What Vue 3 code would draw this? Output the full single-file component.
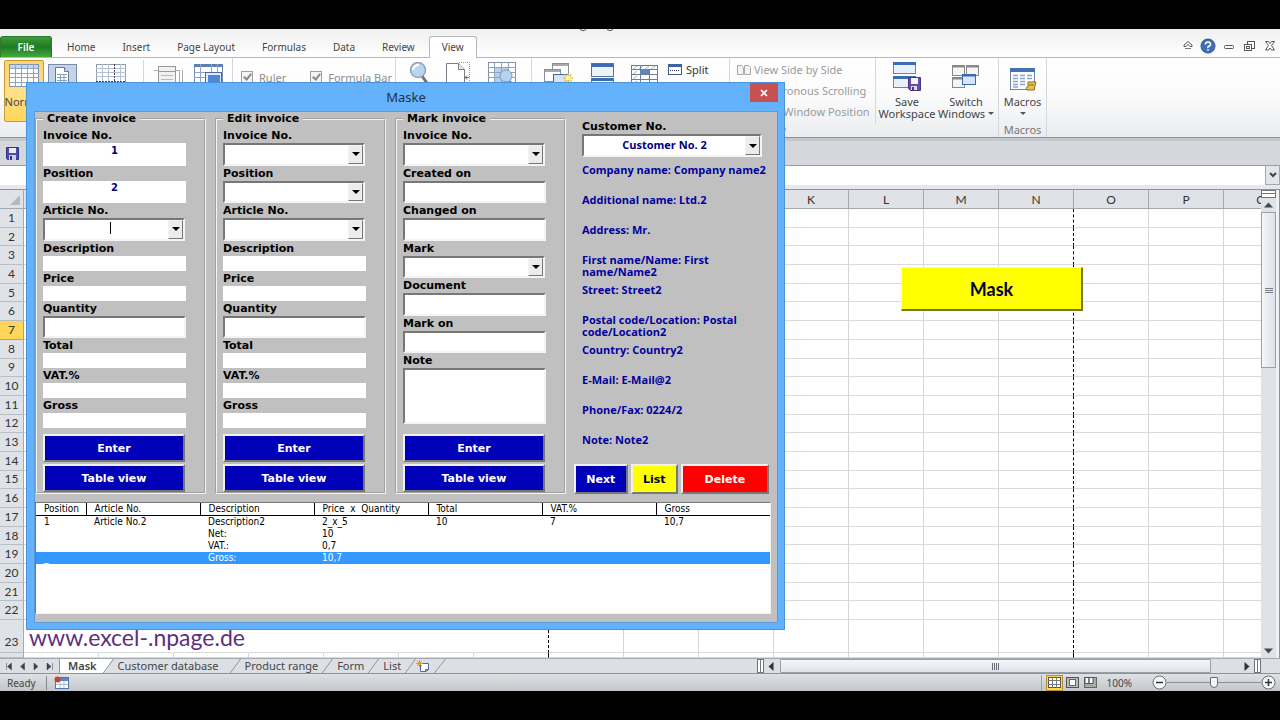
<template>
  <div class="screen">
    <div class="excel">
      <nav class="tabs-bar">
        <svg class="title-rest" width="40" height="3" viewBox="0 0 40 3">
          <path d="M2 0.500q3 2.500 6 0M29 0.500q3 2.500 6 0" fill="none" stroke="#555" />
        </svg>
        <button class="file-btn">File</button>
        <button
          v-for="tab in ribbonTabs"
          :key="tab"
          class="ribbon-tab"
          :class="{ active: tab === 'View' }"
        >
          {{ tab }}
        </button>
        <svg class="window-icons" width="100" height="20" viewBox="0 0 100 20">
          <path d="M8 9l4-3.500 4 3.500v1.500l-2 0-2-2-2 2-2 0z" fill="#fff" stroke="#555" />
          <path d="M9 12.500h6" stroke="#777" />
          <circle cx="32" cy="10" r="7" fill="#3f6fb5" stroke="#2c5590" />
          <path d="M29.500 8.500q0-2.500 2.500-2.500t2.500 2.300q0 1.200-1.500 2t-1 1.700M32 13.200v1.500" fill="none" stroke="#fff" stroke-width="1.600" />
          <rect x="48.500" y="9.500" width="9" height="3" rx="1" fill="#fff" stroke="#555" />
          <rect x="71.500" y="5.500" width="7" height="7" fill="#fff" stroke="#555" />
          <rect x="68.500" y="8.500" width="7" height="6" fill="#fff" stroke="#555" />
          <rect x="70.500" y="10.500" width="3" height="2" fill="#fff" stroke="#555" />
          <path d="M89.500 5.500h3l1.500 2 1.500-2h3l-3 4 3 4.500h-3l-1.500-2-1.500 2h-3l3-4.500z" fill="#fff" stroke="#555" />
        </svg>
      </nav>

      <div class="ribbon">
        <div class="group views">
          <button class="big normal">
            <svg width="30" height="26" viewBox="0 0 30 26">
              <rect x="0.500" y="0.500" width="29" height="22" fill="#fff" stroke="#7d93b4" />
              <rect x="1" y="1" width="28" height="3" fill="#c9d6e8" />
              <path d="M0 4.500h30M0 9.500h30M0 13.500h30M0 18.500h30M6.500 0v23M12.500 0v23M18.500 0v23M24.500 0v23" stroke="#8ea6c6" />
            </svg>
            <span>Normal</span>
          </button>
          <button class="icon-btn" aria-label="Page layout view">
            <svg width="30" height="26" viewBox="0 0 30 26">
              <rect x="0.500" y="0.500" width="28" height="25" fill="#c3d3ea" stroke="#7b8ba8" />
              <path d="M7.500 3.500h9l4 4v18h-13z" fill="#fff" stroke="#6c7788" />
              <path d="M16.500 3.500v4h4" fill="#dde" stroke="#6c7788" />
              <path d="M9 10.500h10M9 13.500h10M9 16.500h10M9 19.500h10M12.500 10v12M16 10v12" stroke="#8aa0c0" />
            </svg>
          </button>
          <button class="icon-btn" aria-label="Page break preview">
            <svg width="30" height="26" viewBox="0 0 30 26">
              <rect x="0.500" y="0.500" width="29" height="24" fill="#fff" stroke="#8c9bb0" />
              <path d="M0 4.500h30M0 8.500h30M0 12.500h30M0 20.500h30M6.500 0v25M12.500 0v25M24.500 0v25" stroke="#b3c0d2" />
              <path d="M0 17.500h30M18.500 0v25" stroke="#445" stroke-dasharray="2 1" />
            </svg>
          </button>
          <div class="divider"></div>
          <button class="icon-btn low" aria-label="Custom views">
            <svg width="30" height="26" viewBox="0 0 30 26">
              <path d="M4.500 2v24M25.500 6v20M0 6.500h26M28.500 6v20" stroke="#aaa" />
              <rect x="4.500" y="2.500" width="17" height="23" fill="#f3f0f4" stroke="#999" />
              <path d="M5 7.500h16" stroke="#c48a8a" />
              <path d="M7 11.500h12M7 15.500h12" stroke="#b9b9c4" />
            </svg>
          </button>
          <button class="icon-btn" aria-label="Full screen">
            <svg width="30" height="26" viewBox="0 0 30 26">
              <rect x="0.500" y="0.500" width="28" height="25" fill="#fff" stroke="#7288ac" />
              <rect x="0" y="0" width="29" height="3" fill="#5d7fb4" />
              <path d="M0 8.500h29M0 13.500h29M0 18.500h29M6.500 0v26M17.500 0v26M23.500 0v26" stroke="#8ea4c4" />
              <rect x="11.500" y="8.500" width="16" height="14" fill="#dfeafa" stroke="#47689c" />
              <rect x="14" y="11" width="12" height="10" fill="#5087d6" />
            </svg>
          </button>
        </div>

        <div class="group show">
          <label class="check"><input v-model="showRuler" type="checkbox" />Ruler</label>
          <label class="check"><input v-model="showFormula" type="checkbox" />Formula Bar</label>
        </div>

        <div class="group zoom">
          <button class="icon-btn" aria-label="Zoom">
            <svg width="20" height="24" viewBox="0 0 20 24">
              <path d="M13 14l5 7" stroke="#77706a" stroke-width="3" />
              <circle cx="9" cy="8" r="7.500" fill="#b9d4ee" stroke="#8fa4bb" stroke-width="1.500" />
              <path d="M4 8q1-5 6-5" fill="none" stroke="#fff" stroke-width="2" />
            </svg>
          </button>
          <button class="icon-btn" aria-label="100%">
            <svg width="25" height="24" viewBox="0 0 25 24">
              <path d="M0.500 1.500h12l6 6v17h-18z" fill="#fff" stroke="#777e88" />
              <path d="M12.500 1.500v6h6" fill="#e6e9ee" stroke="#777e88" />
              <path d="M13 0.500h10.500v23" fill="none" stroke="#99a" stroke-dasharray="1 1" />
              <path d="M19 15.500h4M21 13.500l-2 2 2 2" stroke="#667" fill="none" />
            </svg>
          </button>
          <button class="icon-btn" aria-label="Zoom to selection">
            <svg width="28" height="24" viewBox="0 0 28 24">
              <rect x="0.500" y="0.500" width="27" height="23" fill="#fff" stroke="#8592a6" />
              <rect x="7" y="5" width="14" height="15" fill="#b9cdee" />
              <path d="M0 5.500h28M0 10.500h28M0 15.500h28M0 20.500h28M6.500 0v24M13.500 0v24M20.500 0v24" stroke="#8ea2c2" />
              <circle cx="18" cy="14" r="6" fill="#b5d2ef" stroke="#7f9bbd" />
              <path d="M22 19l4 5" stroke="#77706a" stroke-width="2" />
            </svg>
          </button>
        </div>

        <div class="group window">
          <div class="window-icons-row">
            <button class="icon-btn" aria-label="New window">
              <svg width="30" height="24" viewBox="0 0 30 24">
                <rect x="8.500" y="1.500" width="16" height="11" fill="#fff" stroke="#8a8f98" />
                <rect x="9" y="2" width="15" height="2" fill="#aaa" />
                <rect x="0.500" y="7.500" width="16" height="12" fill="#fff" stroke="#8a8f98" />
                <rect x="1" y="8" width="15" height="2" fill="#aaa" />
                <rect x="9.500" y="12.500" width="15" height="11" fill="#d6e4fa" stroke="#3c63a5" />
                <path d="M24 11v10M19 16h10M20.500 12.500l7 7M27.500 12.500l-7 7" stroke="#edc52e" stroke-width="1.600" />
                <circle cx="24" cy="16" r="2.500" fill="#fff3a0" />
              </svg>
            </button>
            <button class="icon-btn" aria-label="Arrange all">
              <svg width="23" height="24" viewBox="0 0 23 24">
                <rect x="0.500" y="1.500" width="22" height="13" fill="#eef4fc" stroke="#5c7199" />
                <rect x="1" y="2" width="21" height="3" fill="#3e6cb2" />
                <rect x="0.500" y="16.500" width="22" height="8" fill="#eef4fc" stroke="#5c7199" />
                <rect x="1" y="16" width="21" height="3" fill="#3e6cb2" />
              </svg>
            </button>
            <button class="icon-btn" aria-label="Freeze panes">
              <svg width="27" height="24" viewBox="0 0 27 24">
                <rect x="0.500" y="3.500" width="26" height="21" fill="#fff" stroke="#6b7a8f" />
                <path d="M1 8l5-4M1 13l5-4M7 8l5-4M13 8l5-4M19 8l5-4M1 18l5-4M1 23l5-4" stroke="#9fb0c6" />
                <rect x="10" y="7" width="8" height="5" fill="#5e86c6" />
                <path d="M0 7.500h27M0 12.500h27M0 17.500h27M9.500 3v21M18.500 8v16" stroke="#6b7f9e" />
              </svg>
            </button>
          </div>
          <ul class="small-list split-list">
            <li>
              <button class="small-btn dark">
                <svg width="14" height="12" viewBox="0 0 14 12">
                  <rect x="0.500" y="0.500" width="13" height="10" fill="#fff" stroke="#44598a" />
                  <rect x="0" y="0" width="14" height="3" fill="#3d62a4" />
                  <path d="M2 6.500h10" stroke="#334" stroke-dasharray="1 1" />
                </svg>
                Split
              </button>
            </li>
          </ul>
          <ul class="small-list side-list">
            <li>
              <button class="small-btn" disabled>
                <svg width="16" height="12" viewBox="0 0 16 12">
                  <path d="M1.500 1.500h4l2 2v7h-6zM8.500 1.500h4l2 2v7h-6z" fill="#f3f3f3" stroke="#a9a9a9" />
                </svg>
                View Side by Side
              </button>
            </li>
            <li><button class="small-btn indent" disabled>Synchronous Scrolling</button></li>
            <li><button class="small-btn indent" disabled>Reset Window Position</button></li>
          </ul>
          <div class="workspace">
            <button class="tall-btn">
              <svg width="30" height="32" viewBox="0 0 30 32">
                <rect x="1.500" y="1.500" width="22" height="11" fill="#e8f1fc" stroke="#6d83ab" />
                <rect x="1" y="1" width="23" height="3" fill="#3e6cb2" />
                <rect x="1.500" y="15.500" width="22" height="11" fill="#e8f1fc" stroke="#6d83ab" />
                <rect x="1" y="15" width="23" height="3" fill="#3e6cb2" />
                <path d="M16.500 16.500h12v13h-10l-2-2z" fill="#6a4ca3" stroke="#4c3585" />
                <rect x="19" y="17" width="7" height="6" fill="#f4f2fa" />
                <rect x="19" y="25" width="6" height="4" fill="#ded8ee" />
                <rect x="20" y="26" width="2" height="3" fill="#4c3585" />
              </svg>
              <span>Save<br />Workspace</span>
            </button>
            <button class="tall-btn">
              <svg width="30" height="32" viewBox="0 0 30 32">
                <g fill="#f6f6f6" stroke="#888">
                  <rect x="1.500" y="4.500" width="12" height="10" />
                  <rect x="15.500" y="4.500" width="12" height="10" />
                  <rect x="1.500" y="16.500" width="12" height="10" />
                </g>
                <path d="M1 5.500h13M15 5.500h13M1 17.500h13" stroke="#888" stroke-width="2" />
                <rect x="11.500" y="13.500" width="13" height="10" fill="#d5e6fb" stroke="#3c68ae" />
                <path d="M11 14.500h14" stroke="#3c68ae" stroke-width="2" />
              </svg>
              <span>Switch<br />Windows <i class="tri"></i></span>
            </button>
          </div>
          <span class="group-label">Window</span>
        </div>

        <div class="group macros">
          <button class="tall-btn">
            <svg width="30" height="32" viewBox="0 0 30 32">
              <rect x="2.500" y="7.500" width="24" height="21" fill="#fff" stroke="#6c83ae" />
              <rect x="2" y="7" width="25" height="4" fill="#4470b8" />
              <path d="M5 14.500h5M12 14.500h5M19 14.500h5M5 17.500h5M12 17.500h5M19 17.500h5M5 20.500h5M12 20.500h5M5 23.500h5M12 23.500h5M5 26h5" stroke="#86a4d3" stroke-width="1.500" />
              <path d="M20 21h8l-2 8h-7q-2-3 1-3z" fill="#e9c253" stroke="#8f6c1b" />
              <path d="M21 24h5" stroke="#8f6c1b" />
            </svg>
            <span>Macros<br /><i class="tri"></i></span>
          </button>
          <span class="group-label">Macros</span>
        </div>
      </div>

      <div class="quick-bar">
        <button class="icon-btn" aria-label="Save">
          <svg width="13" height="13" viewBox="0 0 13 13">
            <path d="M0.500 0.500h12v12h-11l-1-1z" fill="#4a4ab0" stroke="#33337f" />
            <rect x="3" y="1" width="7" height="5" fill="#e9ecf8" />
            <rect x="3" y="8" width="7" height="5" fill="#c9cdea" />
            <rect x="4" y="9" width="2" height="4" fill="#33337f" />
          </svg>
        </button>
      </div>

      <div class="formula-bar">
        <input v-model="formula" type="text" aria-label="Formula" />
        <button aria-label="Expand formula bar">
          <svg width="8" height="6" viewBox="0 0 8 6"><path d="M1 1l3 3 3-3" fill="none" stroke="#444" stroke-width="2" /></svg>
        </button>
      </div>

      <main class="sheet">
        <div class="cells">
          <div class="col-heads">
            <div class="corner">
              <svg width="10" height="10" viewBox="0 0 10 10"><path d="M10 0v10H0z" fill="#b4b9bf" /></svg>
            </div>
            <div v-for="col in columns" :key="col" class="col-head">{{ col }}</div>
          </div>
          <div v-for="row in 24" :key="row" class="row" :class="{ tall: row === 23, cut: row === 24 }">
            <div class="row-head" :class="{ current: row === 7 }">{{ row < 24 ? row : '' }}</div>
            <div
              v-for="col in columns"
              :key="col"
              class="cell"
              :class="{
                'page-break': col === 'G' || col === 'N',
                merged: row === 23 && col < 'G'
              }"
            >
              <a v-if="row === 23 && col === 'A'" href="#" class="site-link">www.excel-.npage.de</a>
            </div>
          </div>
          <button class="mask-btn" @click="open = true">Mask</button>
        </div>
        <div class="v-scroll">
          <div class="splitter"></div>
          <svg width="15" height="14" viewBox="0 0 15 14"><path d="M3 9.500l4.500-5 4.500 5z" fill="#444a52" /></svg>
          <div class="v-thumb"><i></i><i></i><i></i></div>
          <svg class="down" width="15" height="14" viewBox="0 0 15 14"><path d="M3 4.500l4.500 5 4.500-5z" fill="#444a52" /></svg>
        </div>
      </main>

      <div class="sheet-bar">
        <div class="sheet-tabs">
          <svg class="nav-arrows" width="59" height="15" viewBox="0 0 59 15">
            <path d="M6.500 4v7M11.500 4l-4 3.500 4 3.500zM24.500 4l-4 3.500 4 3.500zM34 4l4 3.500-4 3.500zM47 4l4 3.500-4 3.500zM52.500 4v7" fill="#3c4250" stroke="#3c4250" stroke-width="0.500" />
          </svg>
          <template v-for="(name, i) in sheets" :key="name">
            <button class="sheet-tab" :class="{ active: i === 0, roomy: name.length > 13 }">{{ name }}</button>
            <svg width="12" height="15" viewBox="0 0 12 15">
              <path v-if="i === 0" d="M0 0h11L1 15H0z" fill="#fff" />
              <path d="M11.500 0L0.500 15" stroke="#8e959e" fill="none" />
            </svg>
          </template>
          <button class="icon-btn" aria-label="Insert sheet">
            <svg width="14" height="15" viewBox="0 0 14 15">
              <path d="M4.500 4.500h8v6l-2 2h-6z" fill="#fff" stroke="#4c69a5" />
              <path d="M12.500 10.500h-3v2" fill="#9bb4e0" stroke="#4c69a5" />
              <path d="M3.500 1v7M0 4.500h7M1 2l5 5M6 2L1 7" stroke="#d69a2d" />
            </svg>
          </button>
          <svg width="16" height="15" viewBox="0 0 16 15"><path d="M15.500 0L3.500 15" stroke="#8e959e" /></svg>
        </div>
        <div class="h-scroll">
          <div class="grip-box"></div>
          <svg width="16" height="15" viewBox="0 0 16 15"><path d="M9.500 3l-5 4.500 5 4.500z" fill="#2e333b" /></svg>
          <div class="h-track"><div class="h-thumb"><i></i><i></i><i></i><i></i></div></div>
          <svg width="16" height="15" viewBox="0 0 16 15"><path d="M6.500 3l5 4.500-5 4.500z" fill="#2e333b" /></svg>
          <div class="grip-box end"></div>
        </div>
      </div>

      <footer class="status">
        <span class="ready">Ready</span>
        <svg class="record" width="15" height="13" viewBox="0 0 15 13">
          <rect x="1.500" y="1.500" width="13" height="11" fill="#fff" stroke="#5573a8" />
          <rect x="2" y="2" width="12" height="3" fill="#5f84c4" />
          <path d="M2 8.500h12M6 5v7M10 5v7" stroke="#a9bcd9" />
          <circle cx="3.500" cy="3.500" r="3" fill="#c0453a" />
        </svg>
        <div class="view-switch">
          <button class="on" aria-label="Normal">
            <svg width="13" height="11" viewBox="0 0 13 11"><rect x="0.500" y="0.500" width="12" height="10" fill="#fff" stroke="#555" /><path d="M0 3.500h13M0 7.500h13M4.500 0v11M8.500 0v11" stroke="#777" /></svg>
          </button>
          <button aria-label="Page layout">
            <svg width="13" height="11" viewBox="0 0 13 11"><rect x="0.500" y="0.500" width="12" height="10" fill="#bbb" stroke="#555" /><rect x="3.500" y="2.500" width="6" height="6" fill="#fff" stroke="#666" /></svg>
          </button>
          <button aria-label="Page break">
            <svg width="13" height="11" viewBox="0 0 13 11"><rect x="0.500" y="0.500" width="12" height="10" fill="#aaa" stroke="#666" /><path d="M1 0.500h4v6h-4zM5 0.500h4v6h-4z" fill="#fff" stroke="#555" /></svg>
          </button>
        </div>
        <span class="percent">{{ zoom }}%</span>
        <button class="round" aria-label="Zoom out"><svg width="15" height="15" viewBox="0 0 15 15"><circle cx="7.500" cy="7.500" r="6.500" fill="#f6f7f8" stroke="#6a6f76" /><path d="M4 7.500h7" stroke="#333" stroke-width="1.500" /></svg></button>
        <input v-model="zoom" type="range" min="0" max="200" aria-label="Zoom" />
        <button class="round" aria-label="Zoom in"><svg width="15" height="15" viewBox="0 0 15 15"><circle cx="7.500" cy="7.500" r="6.500" fill="#f6f7f8" stroke="#6a6f76" /><path d="M4 7.500h7M7.500 4v7" stroke="#333" stroke-width="1.500" /></svg></button>
      </footer>

      <section v-if="open" class="dialog" role="dialog" aria-label="Maske">
        <header class="title-bar">
          <h1>Maske</h1>
          <button class="close" aria-label="Close" @click="open = false">
            <svg width="8" height="8" viewBox="0 0 8 8"><path d="M1 1l6 6M7 1L1 7" stroke="#fff" stroke-width="1.700" /></svg>
          </button>
        </header>
        <div class="dialog-body">
          <div class="panels">
            <fieldset v-for="panel in panels" :key="panel.title" class="panel">
              <legend>{{ panel.title }}</legend>
              <div class="fields">
                <div v-for="field in panel.fields" :key="field.label" class="field" :class="'is-' + field.type">
                  <label :for="panel.id + field.label">{{ field.label }}</label>
                  <div v-if="field.type === 'combo'" class="combo">
                    <select :id="panel.id + field.label"></select>
                    <span class="arrow"></span>
                    <span v-if="field.caret" class="caret"></span>
                  </div>
                  <textarea v-else-if="field.type === 'note'" :id="panel.id + field.label"></textarea>
                  <input v-else :id="panel.id + field.label" v-model="field.value" type="text" />
                </div>
              </div>
              <button class="cmd blue">Enter</button>
              <button class="cmd blue">Table view</button>
            </fieldset>

            <div class="customer">
              <label for="customer">Customer No.</label>
              <div class="combo">
                <select id="customer"><option>Customer No. 2</option></select>
                <span class="arrow"></span>
              </div>
              <p v-for="line in customerInfo" :key="line">{{ line }}</p>
              <div class="customer-actions">
                <button class="cmd blue">Next</button>
                <button class="cmd yellow">List</button>
                <button class="cmd red">Delete</button>
              </div>
            </div>
          </div>

          <div class="list-box">
            <table>
              <colgroup>
                <col class="c-pos" />
                <col class="c-std" />
                <col class="c-std" />
                <col class="c-std" />
                <col class="c-std" />
                <col class="c-std" />
                <col />
              </colgroup>
              <thead>
                <tr><th v-for="head in heads" :key="head">{{ head }}</th></tr>
              </thead>
              <tbody>
                <tr v-for="(row, i) in rows" :key="i" :class="{ selected: i === 3 }">
                  <td v-for="(value, j) in row" :key="j">{{ value }}</td>
                </tr>
              </tbody>
            </table>
          </div>
        </div>
      </section>
    </div>
  </div>
</template>

<script setup>
import { ref } from 'vue';

const ribbonTabs = ['Home', 'Insert', 'Page Layout', 'Formulas', 'Data', 'Review', 'View'];
const columns = 'ABCDEFGHIJKLMNOPQ'.split('');
const sheets = ['Mask', 'Customer database', 'Product range', 'Form', 'List'];

const open = ref(true);
const showRuler = ref(true);
const showFormula = ref(true);
const formula = ref('');
const zoom = ref(100);

const panels = ref([
  {
    id: 'create-',
    title: 'Create invoice',
    fields: [
      { label: 'Invoice No.', type: 'plain', value: '1' },
      { label: 'Position', type: 'plain', value: '2' },
      { label: 'Article No.', type: 'combo', caret: true },
      { label: 'Description', type: 'short', value: '' },
      { label: 'Price', type: 'short', value: '' },
      { label: 'Quantity', type: 'sunken', value: '' },
      { label: 'Total', type: 'short', value: '' },
      { label: 'VAT.%', type: 'short', value: '' },
      { label: 'Gross', type: 'short', value: '' }
    ]
  },
  {
    id: 'edit-',
    title: 'Edit invoice',
    fields: [
      { label: 'Invoice No.', type: 'combo' },
      { label: 'Position', type: 'combo' },
      { label: 'Article No.', type: 'combo' },
      { label: 'Description', type: 'short', value: '' },
      { label: 'Price', type: 'short', value: '' },
      { label: 'Quantity', type: 'sunken', value: '' },
      { label: 'Total', type: 'short', value: '' },
      { label: 'VAT.%', type: 'short', value: '' },
      { label: 'Gross', type: 'short', value: '' }
    ]
  },
  {
    id: 'mark-',
    title: 'Mark invoice',
    fields: [
      { label: 'Invoice No.', type: 'combo' },
      { label: 'Created on', type: 'sunken', value: '' },
      { label: 'Changed on', type: 'sunken', value: '' },
      { label: 'Mark', type: 'combo' },
      { label: 'Document', type: 'sunken', value: '' },
      { label: 'Mark on', type: 'sunken', value: '' },
      { label: 'Note', type: 'note' }
    ]
  }
]);

const customerInfo = [
  'Company name: Company name2',
  'Additional name: Ltd.2',
  'Address: Mr.',
  'First name/Name: First name/Name2',
  'Street: Street2',
  'Postal code/Location: Postal code/Location2',
  'Country: Country2',
  'E-Mail: E-Mail@2',
  'Phone/Fax: 0224/2',
  'Note: Note2'
];

const heads = ['Position', 'Article No.', 'Description', 'Price  x  Quantity', 'Total', 'VAT.%', 'Gross'];
const rows = [
  ['1', 'Article No.2', 'Description2', '2_x_5', '10', '7', '10,7'],
  ['', '', 'Net:', '10', '', '', ''],
  ['', '', 'VAT.:', '0,7', '', '', ''],
  ['_', '', 'Gross:', '10,7', '', '', '']
];
</script>

<style>
body {
  margin: 0;
  background: #000;
}
</style>

<style scoped>
* {
  box-sizing: border-box;
}

button,
input,
select,
textarea {
  font: inherit;
  color: inherit;
  margin: 0;
  padding: 0;
  border: none;
  border-radius: 0;
  background: none;
}

svg {
  display: block;
  flex: none;
}

.screen {
  height: 100vh;
  padding: 29px 0;
  background: #000;
  font-family: 'Noto Sans', 'Open Sans', sans-serif;
  font-size: 11px;
  color: #444;
}

.excel {
  position: relative;
  display: flex;
  flex-direction: column;
  height: 100%;
  overflow: hidden;
  background: #fff;
}

/* ribbon tabs */
.tabs-bar {
  position: relative;
  display: flex;
  align-items: flex-end;
  gap: 1px;
  height: 29px;
  flex: none;
  border-bottom: 1px solid #b4b8bd;
  background: linear-gradient(#efefef, #fff);
  font-size: 10px;
}

.title-rest {
  position: absolute;
  left: 578px;
  top: 0;
}

.file-btn {
  width: 52px;
  height: 21px;
  margin-right: 1px;
  border: 1px solid #2c7a2c;
  border-bottom: none;
  border-radius: 3px 3px 0 0;
  background: linear-gradient(#3f9a3a, #1f7a22 50%, #43a83c);
  color: #fff;
  font-weight: 600;
}

.ribbon-tab {
  height: 22px;
  padding: 0 12px 2px;
  border: 1px solid transparent;
  border-bottom: none;
  margin-bottom: -1px;
  white-space: nowrap;
}

.ribbon-tab.active {
  border-color: #b4b8bd;
  border-radius: 3px 3px 0 0;
  background: #fff;
}

.window-icons {
  margin: 0 4px 1px auto;
}

/* ribbon */
.ribbon {
  display: flex;
  flex: none;
  height: 80px;
  background: linear-gradient(#fff, #fbfbfc 50%, #eaecef);
  border-bottom: 1px solid #8d9299;
}

.group {
  position: relative;
  display: flex;
  align-items: flex-start;
  flex: none;
  border-right: 1px solid #d4d7db;
}

.icon-btn {
  flex: none;
}

.views {
  width: 233px;
  padding: 2px 0 0 4px;
  gap: 4px;
}

.views .icon-btn {
  margin-top: 4px;
}

.views .normal + .icon-btn {
  margin-right: 14px;
}

.views .divider {
  flex: none;
  width: 1px;
  height: 66px;
  margin: 0 6px 0 13px;
  background: #d4d7db;
}

.views .icon-btn.low {
  margin-right: 6px;
}

.big {
  display: flex;
  flex: none;
  flex-direction: column;
  align-items: center;
  gap: 4px;
  width: 40px;
  height: 62px;
  border: 1px solid #c79a34;
  border-radius: 2px;
  background: linear-gradient(#fbd473, #fde08a 50%, #ffd65a);
  padding-top: 3px;
}

.show {
  width: 163px;
  padding: 10px 0 0 8px;
  gap: 24px;
}

.check {
  display: flex;
  align-items: center;
  gap: 6px;
  height: 18px;
  white-space: nowrap;
  color: #8c8c8c;
}

.check input {
  appearance: none;
  width: 12px;
  height: 12px;
  border: 1px solid #9a9fa5;
  background: #f4f4f4;
}

.check input:checked::after {
  content: '';
  display: block;
  width: 3px;
  height: 6px;
  margin: 0 0 0 3px;
  border: solid #888;
  border-width: 0 2px 2px 0;
  transform: rotate(40deg);
}

.zoom {
  width: 136px;
  padding: 4px 0 0 13px;
  gap: 17px;
}

.window {
  width: 467px;
  padding-left: 12px;
}

.window-icons-row {
  display: flex;
  gap: 17px;
  padding-top: 4px;
}

.small-list {
  flex: none;
  list-style: none;
  margin: 0;
  padding: 1px 0 0;
}

.split-list {
  width: 62px;
  height: 66px;
  margin-left: 10px;
  border-right: 1px solid #d4d7db;
}

.side-list {
  width: 146px;
  height: 66px;
  padding-left: 6px;
  border-right: 1px solid #d4d7db;
}

.small-btn {
  display: flex;
  align-items: center;
  gap: 2px;
  height: 21px;
  white-space: nowrap;
  color: #9a9a9a;
}

.small-btn.dark {
  color: #333;
  gap: 4px;
}

.small-btn.indent {
  padding-left: 16px;
}

.workspace {
  display: flex;
  flex: none;
}

.tall-btn {
  display: flex;
  flex: none;
  flex-direction: column;
  align-items: center;
  gap: 3px;
  width: 56px;
  padding-top: 3px;
  line-height: 12px;
  white-space: nowrap;
}

.workspace .tall-btn:first-child {
  width: 62px;
}

.tri {
  display: inline-block;
  border: 3px solid transparent;
  border-top-color: #555;
  border-bottom: none;
  vertical-align: 3px;
}

.group-label {
  position: absolute;
  left: 0;
  right: 0;
  bottom: 0;
  line-height: 14px;
  text-align: center;
  color: #777;
}

.macros {
  width: 48px;
  justify-content: center;
}

/* toolbar and formula bar */
.quick-bar {
  display: flex;
  align-items: center;
  flex: none;
  height: 28px;
  padding: 0 6px;
  border-top: 3px solid #c3c8ce;
  border-bottom: 1px solid #989da4;
  background: #d4d8dd;
}

.formula-bar {
  display: flex;
  flex: none;
  height: 24px;
  border-bottom: 1px solid #8d9299;
  background: #fff;
  padding-bottom: 4px;
  box-shadow: inset 0 -4px #e6e8eb;
}

.formula-bar input {
  flex: 1;
}

.formula-bar button {
  display: flex;
  align-items: center;
  justify-content: center;
  width: 15px;
  border: 1px solid #a4a9b0;
  border-top: none;
  background: #e2e5e9;
}

/* cell grid */
.sheet {
  display: flex;
  flex: 1;
  min-height: 0;
}

.cells {
  position: relative;
  display: flex;
  flex-direction: column;
  flex: 1;
  min-width: 0;
  overflow: hidden;
  font-family: Lato, sans-serif;
  font-size: 12px;
  color: #333;
}

.col-heads {
  display: flex;
  flex: none;
  height: 19px;
  line-height: 19px;
}

.corner,
.col-head {
  flex: none;
  width: 75px;
  border-right: 1px solid #a4a9b0;
  border-bottom: 1px solid #a4a9b0;
  background: #dfe3e8;
  text-align: center;
}

.corner {
  width: 24px;
  padding: 5px 0 0 10px;
}

.row {
  display: flex;
  flex: 1 1 0;
  min-height: 0;
}

.row.tall {
  flex: 0 0 33px;
}

.row.cut {
  flex: 0 0 5px;
}

.row-head {
  display: flex;
  align-items: center;
  justify-content: center;
  flex: none;
  width: 24px;
  overflow: hidden;
  border-right: 1px solid #a4a9b0;
  border-bottom: 1px solid #b9bec4;
  background: #dfe3e8;
  line-height: 16px;
}

.row.tall .row-head {
  padding-top: 12px;
}

.row-head.current {
  background: #fdd65a;
  border-color: #c9a13b;
}

.cell {
  flex: none;
  width: 75px;
  border-right: 1px solid #d4d6d8;
  border-bottom: 1px solid #d8dadc;
  white-space: nowrap;
}

.cell.page-break {
  border-right: 1px dashed #000;
}

.cell.merged {
  border-right-color: transparent;
}

.site-link {
  display: block;
  padding-left: 5px;
  font-size: 23px;
  line-height: 34px;
  color: #5d3080;
  text-decoration: none;
}

.mask-btn {
  position: absolute;
  left: 901px;
  top: 77px;
  width: 182px;
  height: 44px;
  border: 1px solid #ffffb0;
  border-right: 2px solid #77771a;
  border-bottom: 2px solid #77771a;
  background: #ff0;
  font-size: 18px;
  font-weight: 700;
  color: #00003c;
}

.v-scroll {
  display: flex;
  flex-direction: column;
  flex: none;
  width: 19px;
  padding-right: 3px;
  border-right: 1px solid #8d9299;
  background: #dfe3e8;
  box-shadow: inset -3px 0 #f0f1f3;
}

.splitter {
  height: 8px;
  border: 1px solid #70757c;
  background: linear-gradient(#fff 2px, #70757c 2px, #70757c 3px, #fff 3px);
}

.v-thumb {
  display: flex;
  flex-direction: column;
  align-items: center;
  justify-content: center;
  gap: 1px;
  height: 156px;
  border: 1px solid #9aa0a8;
  background: linear-gradient(90deg, #f6f7fa, #dde1e8);
}

.v-thumb i {
  width: 8px;
  height: 1px;
  background: #777d86;
}

.v-scroll .down {
  margin-top: auto;
}

/* sheet tabs */
.sheet-bar {
  display: grid;
  grid-template-columns: 757fr 523fr;
  flex: none;
  height: 16px;
  border-top: 1px solid #a4a9b0;
  border-bottom: 1px solid #8d9299;
  background: #dce0e5;
}

.sheet-tabs,
.h-scroll {
  display: flex;
  align-items: center;
  min-width: 0;
  overflow: hidden;
}

.sheet-tab {
  flex: none;
  height: 15px;
  padding: 0 3px 0 4px;
  line-height: 14px;
  white-space: nowrap;
}

.sheet-tab.roomy {
  padding-right: 10px;
}

.sheet-tab.active {
  padding: 0 5px 0 8px;
  border-left: 1px solid #8e959e;
  background: #fff;
  font-weight: 600;
}

.grip-box {
  width: 7px;
  height: 14px;
  border: 1px solid #70757c;
  background: linear-gradient(90deg, #fff 2px, #70757c 2px, #70757c 3px, #fff 3px);
}

.grip-box.end {
  margin-right: 19px;
}

.h-track {
  display: flex;
  flex: 1;
  height: 14px;
}

.h-thumb {
  display: flex;
  align-items: center;
  justify-content: center;
  gap: 1px;
  width: 94%;
  border: 1px solid #9aa0a8;
  border-radius: 1px;
  background: linear-gradient(#f6f7fa, #dfe3ea);
}

.h-thumb i {
  width: 1px;
  height: 7px;
  background: #666c75;
}

/* status bar */
.status {
  display: flex;
  align-items: center;
  flex: none;
  height: 17px;
  padding: 0 4px 0 7px;
  background: linear-gradient(#dfe1e4, #c2c6ca);
  font-size: 10px;
}

.ready {
  padding-right: 10px;
  border-right: 1px solid #83888e;
}

.record {
  margin: 0 8px 0 7px;
}

.view-switch {
  display: flex;
  gap: 1px;
  margin-left: auto;
  padding-left: 4px;
  border-left: 1px solid #9ba0a6;
}

.view-switch button {
  display: flex;
  align-items: center;
  justify-content: center;
  width: 17px;
  height: 16px;
  border: 1px solid transparent;
}

.view-switch .on {
  border-color: #b98f2d;
  background: #fbd55f;
}

.percent {
  margin: 0 20px 0 8px;
}

.status input {
  appearance: none;
  width: 94px;
  height: 15px;
  background: linear-gradient(transparent 7px, #8b9096 7px, #8b9096 8px, transparent 8px);
}

.status input::-webkit-slider-thumb {
  appearance: none;
  width: 8px;
  height: 11px;
  border: 1px solid #666b72;
  border-radius: 1px 1px 4px 4px;
  background: #f6f7f8;
}

/* dialog */
.dialog {
  position: absolute;
  left: 26px;
  top: 53px;
  width: 759px;
  padding: 0 6px 6px 7px;
  border: 1px solid #4a94dc;
  background: #64b1fc;
  font-family: 'DejaVu Sans', sans-serif;
  color: #000;
}

.title-bar {
  position: relative;
  display: flex;
  align-items: center;
  justify-content: center;
  height: 28px;
}

.title-bar h1 {
  margin: 0;
  font-family: 'Noto Sans', 'Open Sans', sans-serif;
  font-size: 13px;
  font-weight: 400;
  color: #1f3044;
}

.close {
  position: absolute;
  right: 0;
  top: 0;
  display: flex;
  align-items: center;
  justify-content: center;
  width: 28px;
  height: 19px;
  background: #c75050;
}

.dialog-body {
  border: 1px solid #5a9ad8;
  padding: 0 6px 8px 0;
  background: #c0c0c0;
}

.panels {
  display: flex;
  gap: 9px;
}

.panel {
  width: 171px;
  margin: 0;
  padding: 2px 0 0 6px;
  min-width: 0;
  border: 2px groove #f4f4f4;
}

.panel legend {
  padding: 0 4px;
  font-size: 11px;
  font-weight: 700;
  line-height: 14px;
}

.fields {
  display: flex;
  flex-direction: column;
  width: 143px;
  height: 300px;
  margin-bottom: 6px;
}

.field {
  display: flex;
  flex-direction: column;
  flex: 5 1 0;
  min-height: 0;
}

.field.is-short {
  flex-grow: 4;
}

.field.is-note {
  flex-grow: 10;
}

.field label,
.customer label {
  flex: none;
  height: 15px;
  line-height: 15px;
  font-size: 11px;
  font-weight: 700;
}

.field input,
.field textarea {
  flex: 1;
  width: 143px;
  min-height: 0;
  background: #fff;
}

.field.is-plain input {
  padding-bottom: 8px;
  font-size: 10px;
  font-weight: 700;
  text-align: center;
  color: #000080;
}

.field.is-sunken input,
.field textarea,
.combo {
  border: 2px solid;
  border-color: #777 #f4f4f4 #f4f4f4 #777;
}

.field textarea {
  margin-bottom: 4px;
  resize: none;
}

.combo {
  position: relative;
  display: flex;
  flex: 1;
  width: 142px;
  min-height: 0;
  background: #fff;
}

.combo select {
  appearance: none;
  flex: 1;
  min-width: 0;
  outline: none;
}

.arrow {
  display: flex;
  align-items: center;
  justify-content: center;
  width: 15px;
  border: 1px solid;
  border-color: #f4f4f4 #777 #777 #f4f4f4;
  background: #ececec;
  pointer-events: none;
}

.arrow::after {
  content: '';
  border: 4px solid transparent;
  border-top-color: #000;
  border-bottom: none;
}

.caret {
  position: absolute;
  left: 65px;
  top: 2px;
  width: 1px;
  height: 12px;
  background: #000;
}

.cmd {
  width: 142px;
  height: 28px;
  border: 2px solid;
  border-color: #f0f0f0 #777 #777 #f0f0f0;
  font-size: 11px;
  font-weight: 700;
}

.panel .cmd {
  display: block;
  margin-bottom: 2px;
}

.panel .cmd:last-child {
  margin-bottom: 0;
}

.blue {
  background: #0000b8;
  color: #fff;
}

.yellow {
  background: #ff0;
  color: #00003c;
}

.red {
  background: #f00;
  color: #fff;
}

.customer {
  display: flex;
  flex-direction: column;
  width: 196px;
  padding: 7px 0 0 7px;
}

.customer .combo {
  flex: none;
  width: 180px;
  height: 23px;
  margin-bottom: 7px;
}

.customer select {
  padding-bottom: 2px;
  font-family: 'Open Sans', sans-serif;
  font-size: 11px;
  font-weight: 700;
  text-align: center;
  text-align-last: center;
  color: #000080;
}

.customer p {
  width: 184px;
  height: 30px;
  margin: 0;
  font-family: 'Open Sans', sans-serif;
  font-size: 11px;
  font-weight: 700;
  line-height: 12px;
  color: #0000a0;
}

.customer-actions {
  display: flex;
  gap: 3px;
  width: 195px;
  margin-left: -8px;
}

.customer-actions .cmd {
  flex: 53;
  width: auto;
  height: 30px;
}

.customer-actions .yellow {
  flex: 46;
}

.customer-actions .red {
  flex: 90;
}

.list-box {
  height: 112px;
  margin-top: 8px;
  border: 1px solid;
  border-color: #777 #f4f4f4 #f4f4f4 #777;
  background: #fff;
}

table {
  width: 100%;
  table-layout: fixed;
  border-collapse: collapse;
  font-family: 'DejaVu Sans Condensed', 'DejaVu Sans', sans-serif;
  font-size: 10px;
  line-height: 12px;
}

.c-pos {
  width: 50px;
}

.c-std {
  width: 114px;
}

th,
td {
  height: 12px;
  padding: 0 0 0 8px;
  text-align: left;
  font-weight: 400;
  white-space: pre;
}

th {
  border-bottom: 1px solid #000;
  border-right: 1px solid #000;
}

th:last-child {
  border-right: none;
}

.selected {
  background: #3399ff;
  color: #fff;
}
</style>
